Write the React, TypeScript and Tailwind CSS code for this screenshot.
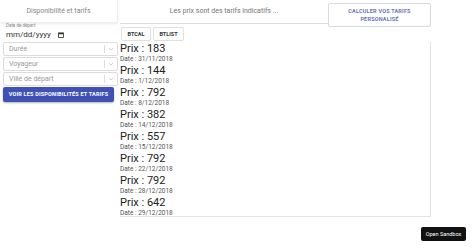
import React from "react";

const prices = [
  { prix: 183, date: "31/11/2018" },
  { prix: 144, date: "1/12/2018" },
  { prix: 792, date: "8/12/2018" },
  { prix: 382, date: "14/12/2018" },
  { prix: 557, date: "15/12/2018" },
  { prix: 792, date: "22/12/2018" },
  { prix: 792, date: "28/12/2018" },
  { prix: 642, date: "29/12/2018" },
];

function FakeSelect({ label }: { label: string }) {
  return (
    <div className="flex h-[14px] items-center rounded-[2px] border border-[#dcdcdc] bg-white">
      <span className="flex-1 pl-[5px] text-[7px] text-[#9a9a9a]">{label}</span>
      <span className="h-[8px] w-px bg-[#dcdcdc]" />
      <svg width="10" height="8" viewBox="0 0 10 8" className="mx-[1px]">
        <path d="M3 3l2 2 2-2" fill="none" stroke="#c8c8c8" strokeWidth="0.8" />
      </svg>
    </div>
  );
}

export default function App() {
  return (
    <div className="relative h-[248px] w-[474px] overflow-hidden bg-white font-['Roboto',sans-serif] text-[#333]">
      <div className="flex">
        {/* sidebar */}
        <div className="w-[120px] shrink-0">
          <div className="flex h-[23px] w-[118px] items-center justify-center border-r border-b border-[#eee] text-[7px] text-[#888] shadow-[0_1px_2px_rgba(0,0,0,0.08)]">
            Disponibilité et tarifs
          </div>
          <div className="pl-[3px] pr-[2px]">
            <div className="pl-[3px] text-[4.5px] leading-[6px] text-[#888]">Date de départ</div>
            <div className="flex h-[12px] w-[62px] items-center justify-between pl-[3px] pr-[1px]">
              <span className="text-[8px] leading-[10px] text-[#333]">mm/dd/yyyy</span>
              <svg width="6" height="6" viewBox="0 0 6 6">
                <rect x="0.5" y="0.9" width="5" height="4.6" fill="none" stroke="#333" strokeWidth="0.8" />
                <rect x="0.5" y="0.9" width="5" height="1.4" fill="#333" />
              </svg>
            </div>
            <div className="mt-[1px] flex flex-col gap-[1px]">
              <FakeSelect label="Durée" />
              <FakeSelect label="Voyageur" />
              <FakeSelect label="Ville de départ" />
            </div>
            <button className="mt-[1px] flex h-[15px] w-[111px] items-center justify-center rounded-[2px] bg-[#3f51b5] text-[5.5px] font-bold tracking-[0.2px] text-white shadow-[0_1px_2px_rgba(0,0,0,0.3)]">
              VOIR LES DISPONIBILITÉS ET TARIFS
            </button>
          </div>
        </div>

        {/* main */}
        <div className="w-[311px] shrink-0">
          <div className="flex h-[27px] items-start">
            <div className="flex h-[24px] w-[208px] items-center justify-center border-b border-[#ddd] text-[7px] text-[#777]">
              Les prix sont des tarifs indicatifs ...
            </div>
            <button className="mt-[3px] flex h-[24px] w-[103px] flex-col items-center justify-center rounded-[2px] border border-[#d6d8e8] text-[5.5px] font-bold leading-[8px] tracking-[0.2px] text-[#6b76b8]">
              <span>CALCULER VOS TARIFS</span>
              <span>PERSONALISÉ</span>
            </button>
          </div>
          <div className="flex gap-[2px] pl-[1px]">
            <button className="flex h-[14px] w-[30px] items-center justify-center rounded-[2px] border border-[#e0e0e0] text-[5.5px] font-bold text-[#333]">
              BTCAL
            </button>
            <button className="flex h-[14px] w-[31px] items-center justify-center rounded-[2px] border border-[#e0e0e0] text-[5.5px] font-bold text-[#333]">
              BTLIST
            </button>
          </div>
          <div className="mt-[1px] h-[175px] border-r border-b border-[#e4e4e4]">
            {prices.map((p, i) => (
              <div key={i} className="h-[22px]">
                <div className="text-[11px] leading-[13px] text-[#222]">Prix : {p.prix}</div>
                <div className="text-[6.5px] leading-[8px] text-[#555]">Date : {p.date}</div>
              </div>
            ))}
          </div>
        </div>
      </div>

      <button className="absolute left-[421px] top-[227px] flex h-[14px] w-[45px] items-center justify-center rounded-[2px] bg-[#111] text-[5.5px] text-white">
        Open Sandbox
      </button>
    </div>
  );
}
